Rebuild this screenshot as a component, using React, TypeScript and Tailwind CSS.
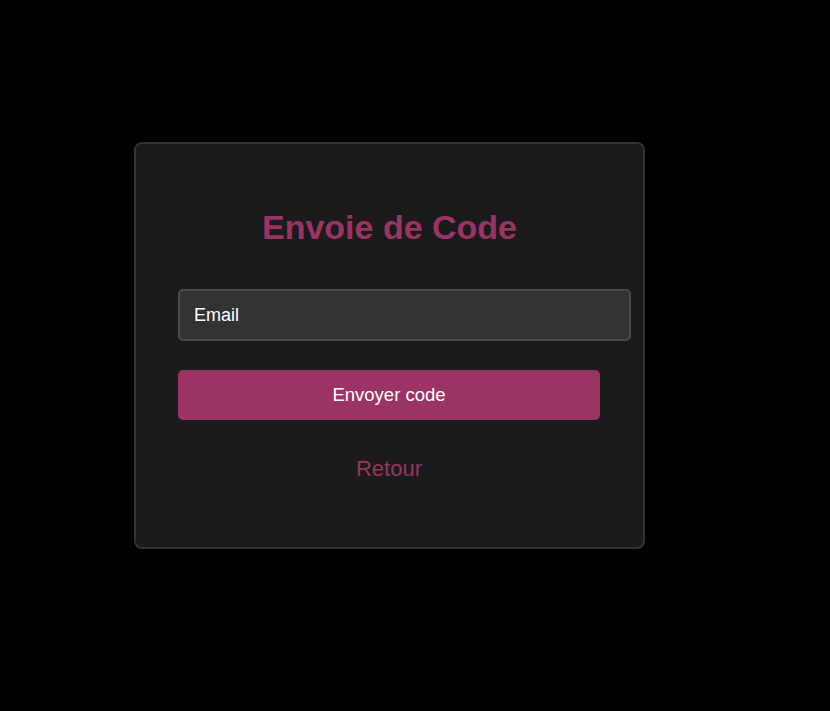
export default function App() {
  return (
    <div
      className="min-h-[711px] bg-black pl-[134px] pt-[142px]"
      style={{ fontFamily: '"Liberation Sans", Arial, sans-serif' }}
    >
      <div className="w-[511px] h-[407px] rounded-lg border-2 border-[#333333] bg-[#1b1b1b] px-[42px] pt-[65px]">
        <h1 className="text-center text-[34px] leading-[37px] font-bold text-[#9b3464]">
          Envoie de Code
        </h1>

        <input
          type="email"
          placeholder="Email"
          className="mt-[43px] block w-[453px] h-[52px] rounded-[5px] border-2 border-[#4a4a4a] bg-[#333333] px-[14px] text-[18px] text-white placeholder:text-white outline-none"
        />

        <button className="mt-[29px] block w-[422px] h-[50px] rounded-[5px] bg-[#9b3464] text-[18.5px] text-white">
          Envoyer code
        </button>

        <div className="mt-[36px] w-[422px] text-center">
          <a href="#" className="text-[22px] leading-[25px] text-[#9b3464]">
            Retour
          </a>
        </div>
      </div>
    </div>
  );
}
